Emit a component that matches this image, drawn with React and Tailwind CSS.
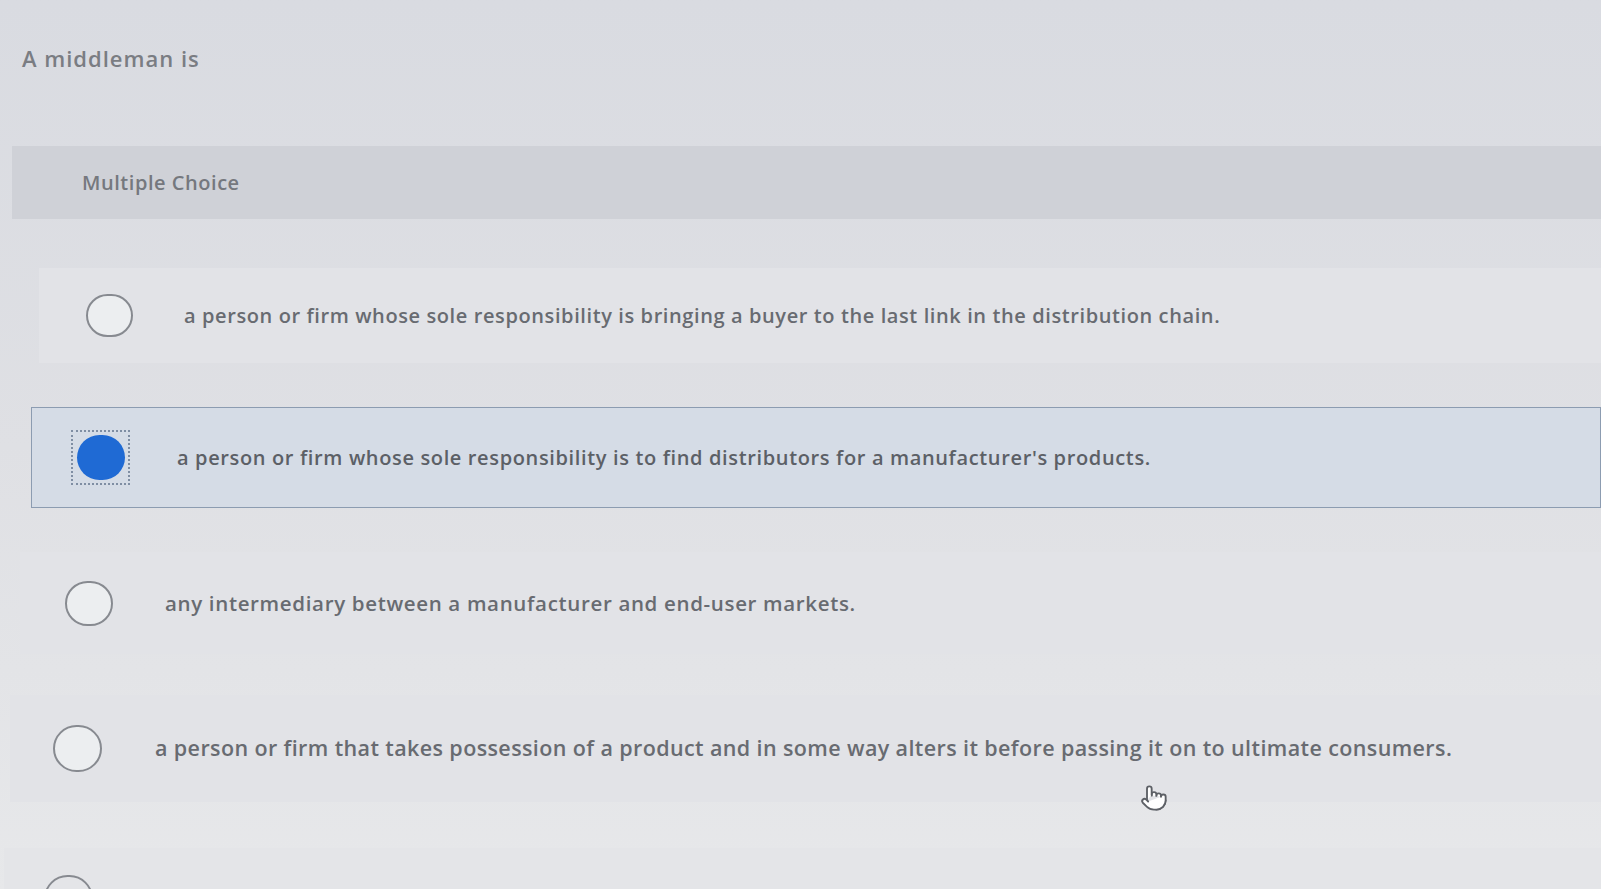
import React from 'react';
import { Pointer } from 'lucide-react';

const options = [
  {
    id: 1,
    text: 'a person or firm whose sole responsibility is bringing a buyer to the last link in the distribution chain.',
    offset: 'ml-[39px] mt-[49px] h-[95px] pl-[47px] gap-[51px]',
    size: 'text-[20px] tracking-[0.03em]',
    ring: 'w-[47px] h-[43px]',
  },
  {
    id: 2,
    text: "a person or firm whose sole responsibility is to find distributors for a manufacturer's products.",
    offset: 'ml-[31px] mt-[44px] h-[101px] pl-[39px] gap-[47px]',
    size: 'text-[20px] tracking-[0.032em]',
    ring: 'w-[48px] h-[45px]',
    selected: true,
  },
  {
    id: 3,
    text: 'any intermediary between a manufacturer and end-user markets.',
    offset: 'ml-[20px] mt-[44px] h-[102px] pl-[45px] gap-[52px]',
    size: 'text-[20.5px] tracking-[0.032em]',
    ring: 'w-[48px] h-[45px]',
  },
  {
    id: 4,
    text: 'a person or firm that takes possession of a product and in some way alters it before passing it on to ultimate consumers.',
    offset: 'ml-[10px] mt-[41px] h-[107px] pl-[43px] gap-[53px]',
    size: 'text-[21.5px] tracking-[0.018em]',
    ring: 'w-[49px] h-[47px]',
  },
];

function Radio({ opt }) {
  if (opt.selected) {
    return (
      <div className="w-[59px] h-[55px] border-2 border-dotted border-[#7f8ea3] flex items-center justify-center shrink-0">
        <div className="w-[48px] h-[45px] rounded-full bg-[#1f6ad4]" />
      </div>
    );
  }
  return <div className={`${opt.ring} rounded-full border-2 border-[#878a90] bg-[#eceef0] shrink-0`} />;
}

export default function App() {
  return (
    <div
      className="relative h-[889px] overflow-hidden bg-gradient-to-b from-[#d9dbe1] via-[#dfe0e4] to-[#e7e8ea] text-[#6c6f75]"
      style={{ fontFamily: '"Open Sans", Lato, sans-serif' }}
    >
      <div className="pt-[45px] pl-[22px] text-[22px] leading-[26px] font-semibold tracking-[0.045em] text-[#7a7d83]">
        A middleman is
      </div>

      <div className="mt-[75px] ml-[12px] h-[73px] bg-[#cfd1d7] flex items-center pl-[70px] text-[20px] font-semibold tracking-[0.027em] text-[#75787e]">
        Multiple Choice
      </div>

      <div className="flex flex-col">
        {options.map((opt) => (
          <div
            key={opt.id}
            className={`${opt.offset} flex items-center ${
              opt.selected
                ? 'bg-[#d5dce6] border-[1.5px] border-[#8c9cb1] text-[#5c6066]'
                : 'bg-[#e2e3e7] text-[#686b71]'
            }`}
          >
            <Radio opt={opt} />
            <span className={`${opt.size} font-semibold`}>{opt.text}</span>
          </div>
        ))}
        <div className="ml-[4px] mt-[46px] h-[100px] pl-[40px] flex items-start pt-[27px] bg-[#e4e5e8]">
          <div className="w-[49px] h-[47px] rounded-full border-2 border-[#878a90]" />
        </div>
      </div>

      <div className="absolute left-[1140px] top-[784px]">
        <Pointer size={28} strokeWidth={1.6} className="text-[#5d6066] fill-white" />
      </div>
    </div>
  );
}
